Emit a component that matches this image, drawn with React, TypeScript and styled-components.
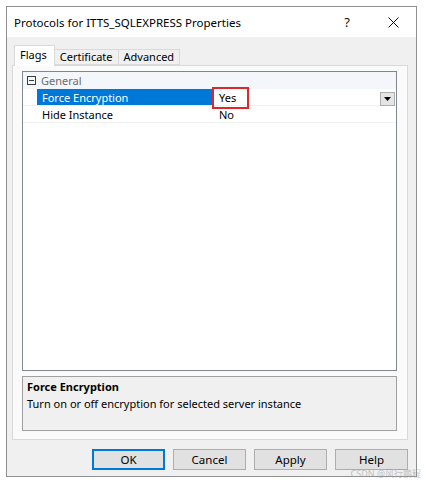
import React from 'react';
import styled, { createGlobalStyle } from 'styled-components';

const GlobalStyle = createGlobalStyle`
  html, body {
    margin: 0;
    padding: 0;
    background: #ffffff;
  }
  body {
    font-family: 'Noto Sans', 'Liberation Sans', 'Noto Sans CJK SC', sans-serif;
    font-size: 11px;
    color: #000;
  }
`;

const Page = styled.div`
  width: 426px;
  height: 480px;
  padding: 6px 0 0 6px;
  box-sizing: border-box;
  position: relative;
`;

const Window = styled.div`
  width: 411px;
  height: 471px;
  box-sizing: border-box;
  border: 1px solid #8f8f8f;
  background: #f0f0f0;
  display: flex;
  flex-direction: column;
`;

const TitleBar = styled.div`
  height: 30px;
  background: #ffffff;
  display: flex;
  align-items: center;
  padding-left: 7px;
  flex-shrink: 0;
`;

const TitleText = styled.span`
  flex: 1;
  font-size: 11.5px;
`;

const TitleButton = styled.span<{ w: number }>`
  width: ${(p) => p.w}px;
  display: flex;
  align-items: center;
  justify-content: center;
  font-size: 13px;
  color: #111;
`;

const Body = styled.div`
  flex: 1;
  display: flex;
  flex-direction: column;
  padding: 7px 8px 0 5px;
`;

const TabStrip = styled.div`
  display: flex;
  align-items: flex-end;
  height: 21px;
  padding-left: 2px;
  position: relative;
  z-index: 1;
`;

const Tab = styled.div<{ active?: boolean }>`
  box-sizing: border-box;
  height: ${(p) => (p.active ? 21 : 16)}px;
  margin-bottom: ${(p) => (p.active ? -1 : 0)}px;
  padding: ${(p) => (p.active ? '2px 7px 0 5px' : '0 5px 0 5px')};
  border: 1px solid #d9d9d9;
  border-bottom: ${(p) => (p.active ? 'none' : '1px solid #d9d9d9')};
  margin-left: ${(p) => (p.active ? 0 : -1)}px;
  background: ${(p) => (p.active ? '#ffffff' : '#f0f0f0')};
  font-size: 11px;
  line-height: 14px;
`;

const Panel = styled.div`
  box-sizing: border-box;
  height: 375px;
  border: 1px solid #d9d9d9;
  background: #fafafa;
  padding: 5px 10px 8px 9px;
  display: flex;
  flex-direction: column;
  gap: 5px;
`;

const Grid = styled.div`
  box-sizing: border-box;
  height: 301px;
  border: 1px solid #82878f;
  background: #ffffff;
  position: relative;
`;

const CategoryRow = styled.div`
  height: 17px;
  display: flex;
  align-items: center;
  background: #f3f6fb;
  padding-left: 4px;
  gap: 5px;
`;

const Expander = styled.span`
  width: 7px;
  height: 7px;
  border: 1px solid #3c3c3c;
  position: relative;
  flex-shrink: 0;
  &::after {
    content: '';
    position: absolute;
    left: 1px;
    right: 1px;
    top: 3px;
    height: 1px;
    background: #3c3c3c;
  }
`;

const CategoryLabel = styled.span`
  color: #6d6d6d;
`;

const Row = styled.div`
  height: 17px;
  display: flex;
  padding-left: 14px;
  border-bottom: 1px solid #f0f0f0;
  box-sizing: border-box;
`;

const NameCell = styled.div<{ selected?: boolean }>`
  width: 175px;
  box-sizing: border-box;
  padding-left: 5px;
  display: flex;
  align-items: center;
  background: ${(p) => (p.selected ? '#0078d7' : 'transparent')};
  color: ${(p) => (p.selected ? '#ffffff' : '#000000')};
`;

const ValueCell = styled.div`
  flex: 1;
  padding-left: 7px;
  display: flex;
  align-items: center;
  justify-content: space-between;
  padding-right: 1px;
`;

const DropButton = styled.span`
  width: 15px;
  height: 14px;
  box-sizing: border-box;
  border: 1px solid #adadad;
  background: #e5e5e5;
  display: flex;
  align-items: center;
  justify-content: center;
  margin-top: 3px;
`;

const Highlight = styled.div`
  position: absolute;
  left: 189px;
  top: 15px;
  width: 37px;
  height: 22px;
  box-sizing: border-box;
  border: 2px solid #e0262b;
`;

const Description = styled.div`
  box-sizing: border-box;
  height: 55px;
  border: 1px solid #a0a0a0;
  background: #f0f0f0;
  padding: 1px 4px;
  line-height: 17px;
`;

const DescTitle = styled.div`
  font-weight: bold;
`;

const ButtonRow = styled.div`
  display: flex;
  justify-content: flex-end;
  gap: 8px;
  padding-top: 9px;
`;

const DialogButton = styled.button<{ primary?: boolean }>`
  width: 73px;
  height: 21px;
  box-sizing: border-box;
  font-family: inherit;
  font-size: 11.5px;
  padding: 0;
  background: #e1e1e1;
  border: ${(p) => (p.primary ? '2px solid #0078d7' : '1px solid #adadad')};
  color: #000;
`;

const Watermark = styled.span`
  position: absolute;
  right: 5px;
  bottom: 1px;
  font-size: 9px;
  line-height: 11px;
  color: rgba(150, 150, 150, 0.55);
  font-family: 'Noto Sans', 'Noto Sans CJK SC', sans-serif;
`;

export default function App() {
  return (
    <Page>
      <GlobalStyle />
      <Window>
        <TitleBar>
          <TitleText>Protocols for ITTS_SQLEXPRESS Properties</TitleText>
          <TitleButton w={46}>?</TitleButton>
          <TitleButton w={46}>
            <svg width="11" height="11" viewBox="0 0 11 11">
              <path d="M0.5 0.5 L10.5 10.5 M10.5 0.5 L0.5 10.5" stroke="#111" strokeWidth="1" />
            </svg>
          </TitleButton>
        </TitleBar>
        <Body>
          <TabStrip>
            <Tab active>Flags</Tab>
            <Tab>Certificate</Tab>
            <Tab>Advanced</Tab>
          </TabStrip>
          <Panel>
            <Grid>
              <CategoryRow>
                <Expander />
                <CategoryLabel>General</CategoryLabel>
              </CategoryRow>
              <Row>
                <NameCell selected>Force Encryption</NameCell>
                <ValueCell>
                  <span>Yes</span>
                  <DropButton>
                    <svg width="7" height="4" viewBox="0 0 7 4">
                      <path d="M0 0 H7 L3.5 4 Z" fill="#000" />
                    </svg>
                  </DropButton>
                </ValueCell>
              </Row>
              <Row>
                <NameCell>Hide Instance</NameCell>
                <ValueCell>
                  <span>No</span>
                </ValueCell>
              </Row>
              <Highlight />
            </Grid>
            <Description>
              <DescTitle>Force Encryption</DescTitle>
              <div>Turn on or off encryption for selected server instance</div>
            </Description>
          </Panel>
          <ButtonRow>
            <DialogButton primary>OK</DialogButton>
            <DialogButton>Cancel</DialogButton>
            <DialogButton>Apply</DialogButton>
            <DialogButton>Help</DialogButton>
          </ButtonRow>
        </Body>
      </Window>
      <Watermark>CSDN @风行鹏程</Watermark>
    </Page>
  );
}
